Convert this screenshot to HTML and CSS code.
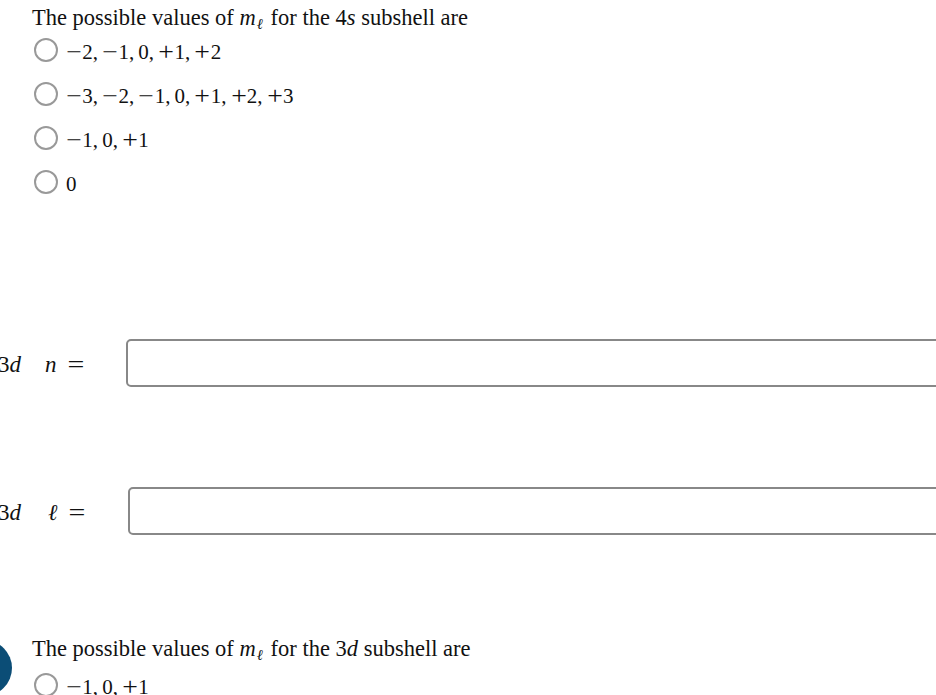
FILE: index.html
```html
<!DOCTYPE html>
<html>
<head>
<meta charset="utf-8">
<link rel="stylesheet" href="styles.css">
</head>
<body>
<div class="page">
  <section class="question q1">
    <p class="prompt">The possible values of <i class="mi">m</i><sub><i>ℓ</i></sub> for the 4<i>s</i> subshell are</p>
    <ul class="options">
      <li class="option"><span class="radio"></span><span class="math"><span class="op">−</span>2<span class="c">,</span><span class="op">−</span>1<span class="c">,</span>0<span class="c">,</span><span class="op">+</span>1<span class="c">,</span><span class="op">+</span>2</span></li>
      <li class="option"><span class="radio"></span><span class="math"><span class="op">−</span>3<span class="c">,</span><span class="op">−</span>2<span class="c">,</span><span class="op">−</span>1<span class="c">,</span>0<span class="c">,</span><span class="op">+</span>1<span class="c">,</span><span class="op">+</span>2<span class="c">,</span><span class="op">+</span>3</span></li>
      <li class="option"><span class="radio"></span><span class="math"><span class="op">−</span>1<span class="c">,</span>0<span class="c">,</span><span class="op">+</span>1</span></li>
      <li class="option"><span class="radio"></span><span class="math">0</span></li>
    </ul>
  </section>

  <div class="field field-n">
    <span class="label">3<i>d</i><span class="sp"></span><i>n</i><span class="eq">=</span></span>
    <span class="input"></span>
  </div>

  <div class="field field-l">
    <span class="label">3<i>d</i><span class="sp"></span><i>ℓ</i><span class="eq">=</span></span>
    <span class="input"></span>
  </div>

  <section class="question q2">
    <span class="badge"></span>
    <p class="prompt">The possible values of <i class="mi">m</i><sub><i>ℓ</i></sub> for the 3<i>d</i> subshell are</p>
    <ul class="options">
      <li class="option"><span class="radio"></span><span class="math"><span class="op">−</span>1<span class="c">,</span>0<span class="c">,</span><span class="op">+</span>1</span></li>
    </ul>
  </section>
</div>
</body>
</html>
```

FILE: styles.css
```css
html, body {
  margin: 0;
  padding: 0;
  background: #ffffff;
}

.page {
  width: 936px;
  height: 695px;
  overflow: hidden;
  position: relative;
  font-family: "Liberation Serif", "Times New Roman", serif;
  font-size: 22px;
  color: #111111;
}

.question {
  position: relative;
}

.prompt {
  margin: 0;
  padding: 8px 0 0 32px;
  height: 20px;
  line-height: 20px;
  font-size: 22.5px;
  white-space: nowrap;
}

.prompt .mi {
  margin-right: 1px;
}

.prompt sub {
  font-size: 15px;
  line-height: 0;
  vertical-align: -4px;
  margin-right: 2px;
}

.options {
  list-style: none;
  margin: 0;
  padding: 0;
}

.option {
  height: 44px;
  display: flex;
  align-items: center;
  padding-left: 34px;
  gap: 8px;
}

.radio {
  width: 20px;
  height: 20px;
  border: 2px solid #999999;
  border-radius: 50%;
  flex: none;
}

.math {
  font-size: 21px;
  line-height: 24px;
  padding-top: 4px;
  white-space: nowrap;
}

.op {
  display: inline-block;
  width: 0.778em;
  text-align: center;
  transform: scale(1.32, 1.15);
}

.c {
  display: inline-block;
  width: 0.445em;
  text-align: left;
}

.field {
  display: flex;
  align-items: center;
  height: 48px;
}

.field-n {
  margin-top: 135px;
}

.field-l {
  margin-top: 100px;
}

.label {
  margin-left: -2px;
  flex: none;
  font-size: 23px;
  line-height: 24px;
  padding-top: 4px;
  white-space: nowrap;
}

.field-n .label {
  width: 128px;
}

.field-l .label {
  width: 130px;
}

.sp {
  display: inline-block;
  width: 24px;
}

.field-l .sp {
  width: 27px;
}

.eq {
  display: inline-block;
  width: 0.778em;
  margin-left: 0.45em;
  text-align: center;
  transform: scaleX(1.3);
}

.input {
  flex: none;
  width: 900px;
  height: 44px;
  border: 2px solid #888888;
  border-radius: 5px;
  box-sizing: content-box;
}

.q2 {
  margin-top: 96px;
}

.q2 .options {
  margin-top: 4px;
}

.badge {
  position: absolute;
  left: -44px;
  top: 9px;
  width: 56px;
  height: 56px;
  border-radius: 50%;
  background: #0b4d76;
}
```
